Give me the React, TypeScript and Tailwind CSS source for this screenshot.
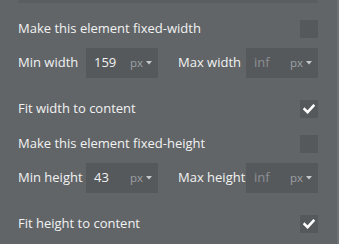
import React from "react";

const font = { fontFamily: '"Open Sans", "Noto Sans", sans-serif' };

function Check({ checked }: { checked: boolean }) {
  return (
    <div className="w-[18px] h-[18px] bg-[#56595c] flex items-center justify-center">
      {checked && (
        <svg width="12" height="10" viewBox="0 0 12 10">
          <path d="M1.5 5.2 L4.6 8.2 L10.5 1.8" fill="none" stroke="#ffffff" strokeWidth="2.6" strokeLinecap="square" />
        </svg>
      )}
    </div>
  );
}

function Unit() {
  return (
    <div className="flex items-center gap-[3px] text-[#9ca0a4] text-[11.5px]">
      <span>px</span>
      <svg width="6" height="4" viewBox="0 0 6 4">
        <path d="M0 0 L6 0 L3 3.5 Z" fill="#c8cbce" />
      </svg>
    </div>
  );
}

function Box({ value, placeholder }: { value?: string; placeholder?: string }) {
  return (
    <div className="w-[72px] h-[30px] bg-[#56595c] flex items-center justify-between pl-[8px] pr-[6px]">
      <span className={value ? "text-[#f2f2f2] text-[13px]" : "text-[#8c9094] text-[13px]"}>{value ?? placeholder}</span>
      <Unit />
    </div>
  );
}

function CheckRow({ label, checked, mt }: { label: string; checked: boolean; mt: string }) {
  return (
    <div className={`flex items-center justify-between h-[18px] ${mt}`}>
      <span className="text-[#f2f2f2] text-[13px]">{label}</span>
      <Check checked={checked} />
    </div>
  );
}

function SizeRow({ a, av, b, mt }: { a: string; av: string; b: string; mt: string }) {
  return (
    <div className={`flex items-center h-[30px] ${mt}`}>
      <span className="text-[#f2f2f2] text-[13px] w-[68px]">{a}</span>
      <Box value={av} />
      <span className="text-[#f2f2f2] text-[13px] ml-[20px] w-[68px]">{b}</span>
      <Box placeholder="inf" />
    </div>
  );
}

export default function App() {
  return (
    <div className="w-[339px] h-[244px] bg-[#616568] relative overflow-hidden" style={font}>
      <div className="absolute right-0 top-0 w-[2px] h-full bg-[#6e7275]" />
      <div className="ml-[18px] w-[300px] h-[3px] bg-[#5a5e61]" />
      <div className="pl-[18px] pr-[21px]">
        <CheckRow label="Make this element fixed-width" checked={false} mt="mt-[17px]" />
        <SizeRow a="Min width" av="159" b="Max width" mt="mt-[10px]" />
        <CheckRow label="Fit width to content" checked={true} mt="mt-[22px]" />
        <CheckRow label="Make this element fixed-height" checked={false} mt="mt-[17px]" />
        <SizeRow a="Min height" av="43" b="Max height" mt="mt-[10px]" />
        <CheckRow label="Fit height to content" checked={true} mt="mt-[22px]" />
      </div>
    </div>
  );
}
